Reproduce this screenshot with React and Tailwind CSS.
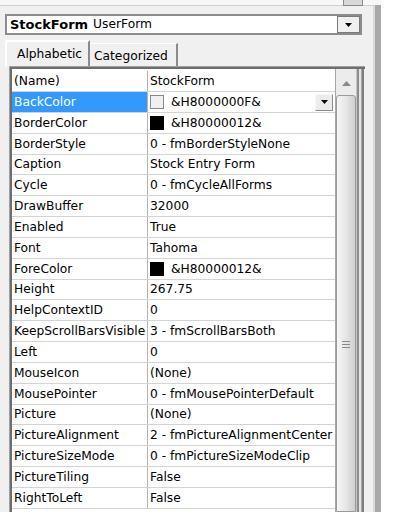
import React from 'react';

const rows = [
  { name: '(Name)', value: 'StockForm' },
  { name: 'BackColor', value: '&H8000000F&', swatch: 'light', selected: true },
  { name: 'BorderColor', value: '&H80000012&', swatch: 'dark' },
  { name: 'BorderStyle', value: '0 - fmBorderStyleNone' },
  { name: 'Caption', value: 'Stock Entry Form' },
  { name: 'Cycle', value: '0 - fmCycleAllForms' },
  { name: 'DrawBuffer', value: '32000' },
  { name: 'Enabled', value: 'True' },
  { name: 'Font', value: 'Tahoma' },
  { name: 'ForeColor', value: '&H80000012&', swatch: 'dark' },
  { name: 'Height', value: '267.75' },
  { name: 'HelpContextID', value: '0' },
  { name: 'KeepScrollBarsVisible', value: '3 - fmScrollBarsBoth' },
  { name: 'Left', value: '0' },
  { name: 'MouseIcon', value: '(None)' },
  { name: 'MousePointer', value: '0 - fmMousePointerDefault' },
  { name: 'Picture', value: '(None)' },
  { name: 'PictureAlignment', value: '2 - fmPictureAlignmentCenter' },
  { name: 'PictureSizeMode', value: '0 - fmPictureSizeModeClip' },
  { name: 'PictureTiling', value: 'False' },
  { name: 'RightToLeft', value: 'False' },
];

// small black down arrow used by both drop buttons
const DownArrow = () => (
  <svg width="7" height="4" viewBox="0 0 7 4">
    <path d="M0 0h7L3.5 4z" fill="#000" />
  </svg>
);

const Row = ({ row }) => (
  <div className="flex h-[20.83px] shrink-0 border-b border-[#d4d4d4]">
    <div
      className={`w-[136px] shrink-0 flex items-center pl-[2px] border-r border-[#b4b4b4] ${
        row.selected ? 'bg-[#3399ff] text-white' : 'text-black'
      }`}
    >
      {row.name}
    </div>
    <div className="flex-1 flex items-center pl-[2px] pr-[2px] text-black whitespace-nowrap overflow-hidden">
      {row.swatch && (
        <span
          className={`w-[14px] h-[14px] shrink-0 mr-[7px] border ${
            row.swatch === 'light' ? 'bg-[#f0f0f0] border-[#8a8a8a]' : 'bg-black border-black'
          }`}
        />
      )}
      <span className="flex-1">{row.value}</span>
      {row.selected && (
        <span className="w-[18px] h-[17px] flex items-center justify-center bg-[#ececec] border border-t-[#f8f8f8] border-l-[#f8f8f8] border-r-[#8a8a8a] border-b-[#8a8a8a]">
          <DownArrow />
        </span>
      )}
    </div>
  </div>
);

export default function App() {
  return (
    <div className="w-[394px] h-[522px] bg-white overflow-hidden font-['DejaVu_Sans',sans-serif] text-[12.25px] leading-none">
      <div className="w-[381px] h-[512px] flex bg-[#f0f0f0]">
        <div className="w-[373px] flex flex-col">
          {/* top strip */}
          <div className="flex h-[6px] shrink-0">
            <div className="flex-1 bg-[#f7f7f7] border-b border-[#cfcfcf]" />
            <div className="w-[20px] bg-[#d8d8d8] border-x border-b border-[#8a8a8a]" />
            <div className="w-[10px] bg-[#f7f7f7] border-b border-[#cfcfcf]" />
          </div>

          {/* object combo */}
          <div className="mt-[8px] ml-[5px] w-[357px] h-[21px] shrink-0 flex items-center bg-white border-2 border-[#8c8c8c]">
            <span className="pl-[3px] font-bold text-[13px]">StockForm</span>
            <span className="pl-[5px] flex-1">UserForm</span>
            <span className="w-[23px] h-[17px] flex items-center justify-center bg-[#f0f0f0] border border-[#7a7a7a]">
              <DownArrow />
            </span>
          </div>

          {/* tabs */}
          <div className="mt-[5px] ml-[5px] h-[26px] shrink-0 flex items-end">
            <div className="w-[85px] h-[26px] flex items-center pl-[10px] border-l-2 border-t-2 border-white border-r-2 border-r-[#8a8a8a] rounded-tl-[2px]">
              Alphabetic
            </div>
            <div className="w-[88px] h-[23px] flex items-center pl-[4px] pt-[2px] border-t border-white border-r-2 border-r-[#8a8a8a]">
              Categorized
            </div>
          </div>

          {/* property grid */}
          <div className="ml-[9px] w-[356px] flex-1 min-h-0 flex border-t border-l border-[#a0a0a0]">
            <div className="flex-1 min-w-0 flex border-t-2 border-l-2 border-[#6e6e6e]">
              <div className="w-[324px] shrink-0 bg-white pt-[2.3px] flex flex-col overflow-hidden border-r border-[#a8a8a8]">
                {rows.map((row) => (
                  <Row key={row.name} row={row} />
                ))}
              </div>
              {/* scrollbar */}
              <div className="w-[20px] shrink-0 flex flex-col bg-[#ececec]">
                <div className="h-[26px] shrink-0 flex justify-center pt-[12px]">
                  <svg width="9" height="5" viewBox="0 0 9 5">
                    <path d="M0 5L4.5 0L9 5z" fill="#8a8a8a" />
                  </svg>
                </div>
                <div className="flex-1 rounded-t-[3px] border border-[#9a9a9a] bg-gradient-to-r from-[#f6f6f6] via-[#e6e6e6] to-[#cfcfcf] flex justify-center">
                  <div className="mt-[245px] w-[8px] h-[7px] flex flex-col justify-between">
                    <span className="h-px bg-[#8a8a8a]" />
                    <span className="h-px bg-[#8a8a8a]" />
                    <span className="h-px bg-[#8a8a8a]" />
                  </div>
                </div>
              </div>
              {/* right frame */}
              <div className="w-[1px] bg-[#c4c4c4]" />
              <div className="w-[2px] bg-[#8e8e8e]" />
              <div className="w-[2px] bg-[#e4e4e4]" />
              <div className="w-[1px] bg-[#a6a6a6]" />
              <div className="w-[2px] bg-[#7e7e7e]" />
            </div>
          </div>
        </div>

        {/* outer right border */}
        <div className="w-[8px] flex flex-col">
          <div className="h-[5px] bg-[#f7f7f7]" />
          <div className="flex-1 flex">
            <div className="w-[2px] bg-[#d8d8d8]" />
            <div className="w-[6px] bg-[#a8a8a8]" />
          </div>
        </div>
      </div>
    </div>
  );
}
